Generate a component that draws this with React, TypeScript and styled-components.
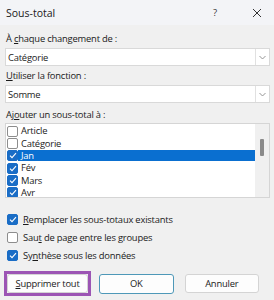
import styled, { createGlobalStyle } from 'styled-components';

const GlobalStyle = createGlobalStyle`
  html, body {
    margin: 0;
    padding: 0;
    background: #f0f0f0;
  }
  body {
    font-family: 'Open Sans', 'Noto Sans', sans-serif;
    color: #1b1b1b;
  }
`;

const Dialog = styled.div`
  width: 274px;
  height: 300px;
  overflow: hidden;
  background: #f0f0f0;
  display: flex;
  flex-direction: column;
`;

const TitleBar = styled.div`
  height: 25px;
  flex-shrink: 0;
  background: #f3f4f7;
  display: flex;
  align-items: center;
  padding-left: 6px;
`;

const Title = styled.span`
  flex: 1;
  font-size: 10.5px;
  color: #202020;
`;

const TitleButton = styled.span`
  width: 20px;
  display: flex;
  justify-content: center;
  align-items: center;
  font-size: 9.5px;
  color: #333;
`;

const Body = styled.div`
  padding: 7px 4px 0 5px;
  display: flex;
  flex-direction: column;
  font-size: 9.4px;
  letter-spacing: -0.2px;
`;

const Label = styled.div<{ $top: number }>`
  margin-top: ${(p) => p.$top}px;
  padding-left: 1px;
  height: 14px;
  line-height: 14px;
`;

const Combo = styled.div`
  margin-top: 2px;
  height: 18px;
  box-sizing: border-box;
  background: #fff;
  border: 1px solid #d9d9d9;
  display: flex;
  align-items: center;
`;

const ComboValue = styled.span`
  flex: 1;
  padding-left: 2px;
`;

const ComboArrow = styled.span`
  width: 13px;
  height: 100%;
  border-left: 1px solid #e1e1e1;
  display: flex;
  align-items: center;
  justify-content: center;
`;

const ListBox = styled.div`
  margin-top: 1px;
  height: 75px;
  box-sizing: border-box;
  background: #fff;
  border: 1px solid #d5d5d5;
  display: flex;
  overflow: hidden;
`;

const ListItems = styled.div`
  flex: 1;
  padding: 1px 0 0 1px;
`;

const ListRow = styled.div`
  height: 12.3px;
  display: flex;
  align-items: center;
`;

const Box = styled.span<{ $checked: boolean }>`
  width: 11px;
  height: 11px;
  box-sizing: border-box;
  flex-shrink: 0;
  border-radius: 2px;
  background: ${(p) => (p.$checked ? '#1a6dc6' : '#fff')};
  border: 1px solid ${(p) => (p.$checked ? '#1a6dc6' : '#8d8d8d')};
  display: flex;
  align-items: center;
  justify-content: center;
`;

const RowText = styled.span<{ $selected: boolean }>`
  flex: 1;
  height: 11.5px;
  line-height: 11.5px;
  padding-left: 3px;
  background: ${(p) => (p.$selected ? '#0a6fd0' : 'transparent')};
  color: ${(p) => (p.$selected ? '#fff' : '#1b1b1b')};
`;

const ScrollTrack = styled.div`
  width: 14px;
  background: #f0f0f0;
  display: flex;
  justify-content: center;
  padding-top: 15px;
`;

const Thumb = styled.div`
  width: 4px;
  height: 17px;
  border-radius: 1px;
  background: #8a8a8a;
`;

const Options = styled.div`
  margin-top: 12px;
  display: flex;
  flex-direction: column;
`;

const OptionRow = styled.label`
  height: 18px;
  display: flex;
  align-items: center;
  gap: 5px;
  padding-left: 2px;
`;

const ButtonRow = styled.div`
  margin: 7px 0 0 -1px;
  display: flex;
  align-items: center;
`;

const Highlight = styled.div`
  border: 3px solid #9c55b4;
  margin-right: 8px;
`;

const Button = styled.button<{ $primary?: boolean; $width: number }>`
  width: ${(p) => p.$width}px;
  height: ${(p) => (p.$primary ? 20 : 19)}px;
  box-sizing: border-box;
  background: #fdfdfd;
  border: 1px solid ${(p) => (p.$primary ? '#4e98b8' : '#d4d4d4')};
  border-radius: 3px;
  font-family: inherit;
  font-size: inherit;
  letter-spacing: inherit;
  color: #1b1b1b;
  padding: 0;
  margin-right: 11px;
`;

const Chevron = () => (
  <svg width="7" height="5" viewBox="0 0 7 5">
    <path d="M0.5 1 L3.5 4 L6.5 1" fill="none" stroke="#8a8a8a" strokeWidth="0.9" />
  </svg>
);

const Check = () => (
  <svg width="8" height="7" viewBox="0 0 8 7">
    <path d="M1 3.6 L3 5.6 L7 1.2" fill="none" stroke="#fff" strokeWidth="1.1" />
  </svg>
);

const rows = [
  { name: 'Article', checked: false },
  { name: 'Catégorie', checked: false },
  { name: 'Jan', checked: true, selected: true },
  { name: 'Fév', checked: true },
  { name: 'Mars', checked: true },
  { name: 'Avr', checked: true },
];

export default function App() {
  return (
    <Dialog>
      <GlobalStyle />
      <TitleBar>
        <Title>Sous-total</Title>
        <TitleButton>?</TitleButton>
        <TitleButton style={{ marginLeft: 22, marginRight: 7 }}>
          <svg width="10" height="10" viewBox="0 0 10 10">
            <path d="M1 1 L9 9 M9 1 L1 9" stroke="#333" strokeWidth="1" />
          </svg>
        </TitleButton>
      </TitleBar>
      <Body>
        <Label $top={0}>
          À <u>c</u>haque changement de :
        </Label>
        <Combo>
          <ComboValue>Catégorie</ComboValue>
          <ComboArrow>
            <Chevron />
          </ComboArrow>
        </Combo>
        <Label $top={3}>
          <u>U</u>tiliser la fonction :
        </Label>
        <Combo>
          <ComboValue>Somme</ComboValue>
          <ComboArrow>
            <Chevron />
          </ComboArrow>
        </Combo>
        <Label $top={5}>
          Aj<u>o</u>uter un sous-total à :
        </Label>
        <ListBox>
          <ListItems>
            {rows.map((r) => (
              <ListRow key={r.name}>
                <Box $checked={r.checked}>{r.checked && <Check />}</Box>
                <RowText $selected={!!r.selected}>{r.name}</RowText>
              </ListRow>
            ))}
          </ListItems>
          <ScrollTrack>
            <Thumb />
          </ScrollTrack>
        </ListBox>
        <Options>
          <OptionRow>
            <Box $checked>
              <Check />
            </Box>
            <span>
              <u>R</u>emplacer les sous-totaux existants
            </span>
          </OptionRow>
          <OptionRow>
            <Box $checked={false} />
            <span>
              Sau<u>t</u> de page entre les groupes
            </span>
          </OptionRow>
          <OptionRow>
            <Box $checked>
              <Check />
            </Box>
            <span>
              Sy<u>n</u>thèse sous les données
            </span>
          </OptionRow>
        </Options>
        <ButtonRow>
          <Highlight>
            <Button $width={81} style={{ marginRight: 0 }}>
              <u>S</u>upprimer tout
            </Button>
          </Highlight>
          <Button $primary $width={80}>
            OK
          </Button>
          <Button $width={80}>Annuler</Button>
        </ButtonRow>
      </Body>
    </Dialog>
  );
}
